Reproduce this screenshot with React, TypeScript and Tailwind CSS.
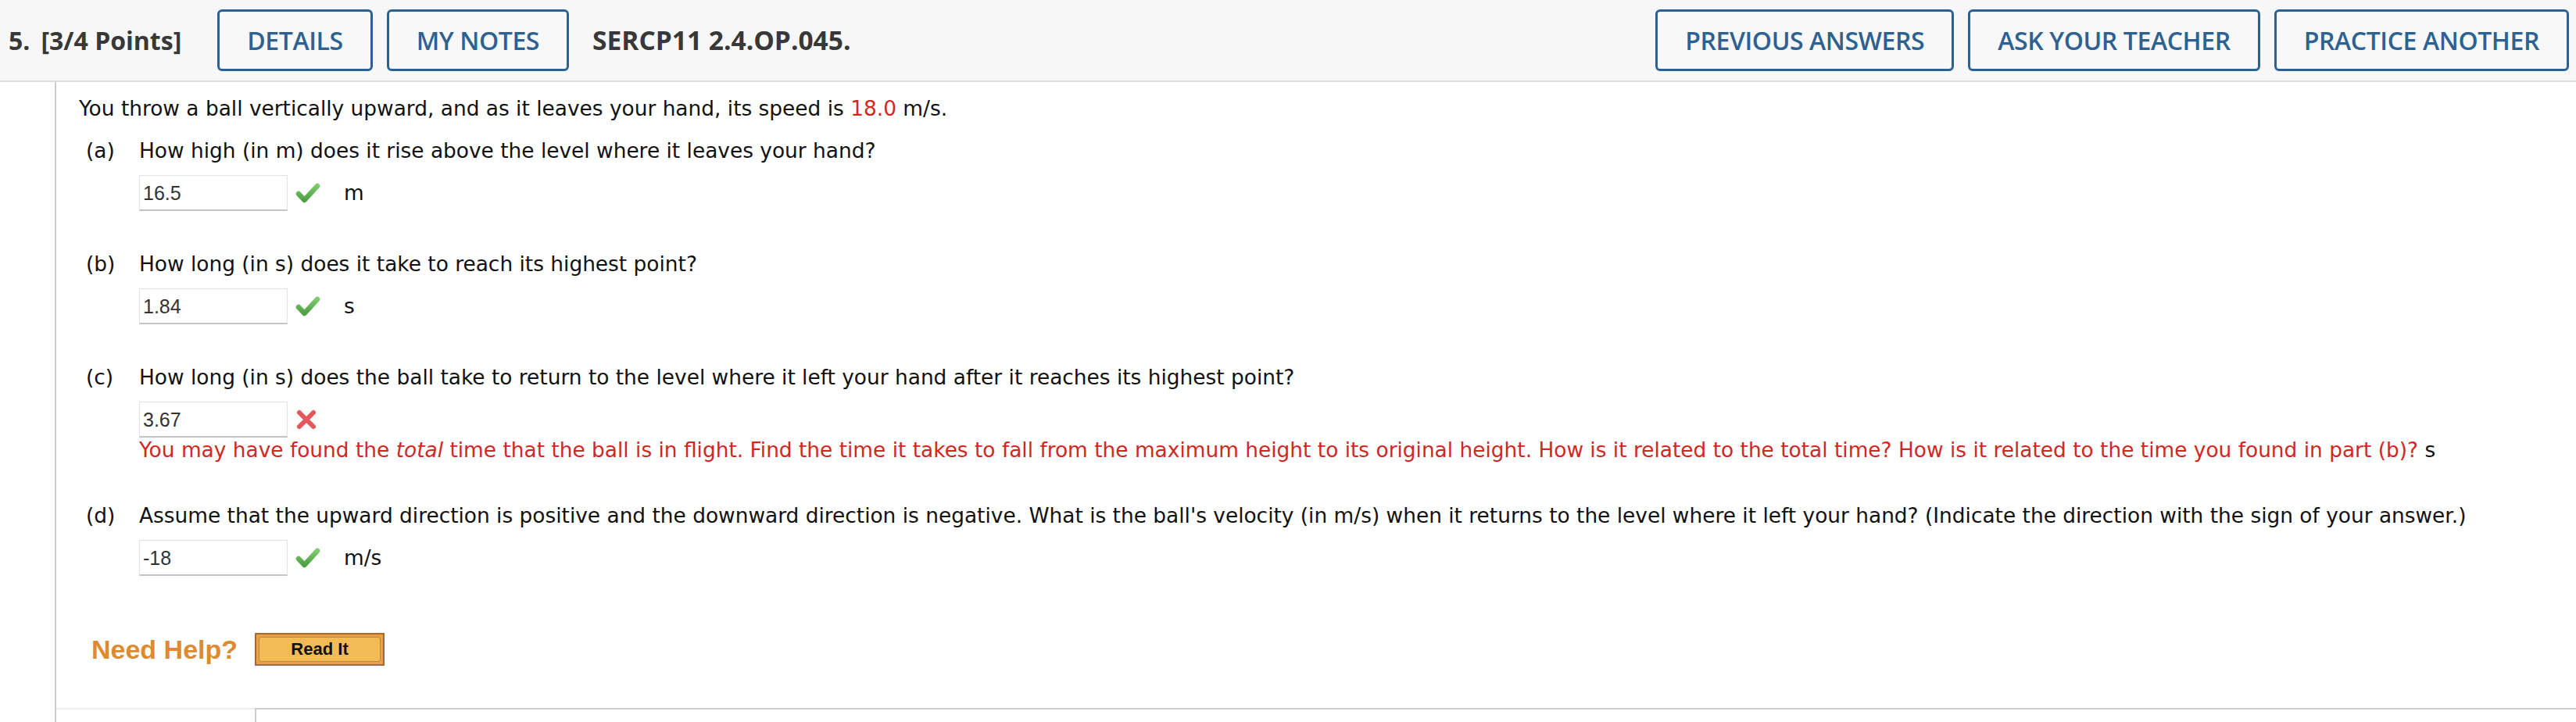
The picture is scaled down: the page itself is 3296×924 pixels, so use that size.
import React from "react";

const body = { fontFamily: '"DejaVu Sans", Verdana, sans-serif' };
const sans = { fontFamily: '"Open Sans", sans-serif' };
const arial = { fontFamily: '"Liberation Sans", Arial, sans-serif' };

function CheckMark() {
  return (
    <svg width="34" height="28" viewBox="0 0 34 28" className="shrink-0">
      <defs>
        <linearGradient id="chk" x1="0" y1="0" x2="0" y2="1">
          <stop offset="0" stopColor="#7ccb6c" />
          <stop offset="1" stopColor="#4f9f44" />
        </linearGradient>
      </defs>
      <path d="M5 15 L12.5 23 L29 5" fill="none" stroke="url(#chk)" strokeWidth="6.5" strokeLinecap="round" strokeLinejoin="round" />
    </svg>
  );
}

function CrossMark() {
  return (
    <svg width="28" height="28" viewBox="0 0 28 28" className="shrink-0">
      <path d="M5 5 L23 23 M23 5 L5 23" fill="none" stroke="#e4575c" strokeWidth="6" strokeLinecap="round" />
    </svg>
  );
}

function HeaderButton({ label }: { label: string }) {
  return (
    <div
      className="h-[79px] px-[35px] flex items-center border-[3px] border-[#2d6192] rounded-[6px] bg-[#f8f8f8] text-[#2d6192] text-[32px] font-semibold tracking-[-0.4px]"
      style={sans}
    >
      {label}
    </div>
  );
}

function AnswerBox({ value }: { value: string }) {
  return (
    <div
      className="w-[190px] h-[46px] border border-[#e2e2e2] border-b-2 border-b-[#c4c4c4] bg-white pl-[4px] flex items-center text-[25px] text-[#333]"
      style={arial}
    >
      {value}
    </div>
  );
}

interface Part {
  label: string;
  question: string;
  value: string;
  correct: boolean;
  unit: string;
}

const parts: Part[] = [
  { label: "(a)", question: "How high (in m) does it rise above the level where it leaves your hand?", value: "16.5", correct: true, unit: "m" },
  { label: "(b)", question: "How long (in s) does it take to reach its highest point?", value: "1.84", correct: true, unit: "s" },
  {
    label: "(c)",
    question: "How long (in s) does the ball take to return to the level where it left your hand after it reaches its highest point?",
    value: "3.67",
    correct: false,
    unit: "s",
  },
  {
    label: "(d)",
    question:
      "Assume that the upward direction is positive and the downward direction is negative. What is the ball's velocity (in m/s) when it returns to the level where it left your hand? (Indicate the direction with the sign of your answer.)",
    value: "-18",
    correct: true,
    unit: "m/s",
  },
];

export default function App() {
  return (
    <div className="min-h-[924px] bg-white text-[#111] flex flex-col">
      {/* header */}
      <header className="h-[105px] bg-[#f7f7f7] border-b-2 border-[#dddddd] flex items-center pl-[11px] pr-[9px]" style={sans}>
        <div className="text-[32px] font-bold text-[#383838]">
          5.<span className="ml-[14px]">[3/4 Points]</span>
        </div>
        <div className="flex gap-[18px] ml-[46px]">
          <HeaderButton label="DETAILS" />
          <HeaderButton label="MY NOTES" />
        </div>
        <div className="ml-[30px] text-[33.5px] font-bold text-[#383838]">SERCP11 2.4.OP.045.</div>
        <div className="ml-auto flex gap-[18px]">
          <HeaderButton label="PREVIOUS ANSWERS" />
          <HeaderButton label="ASK YOUR TEACHER" />
          <HeaderButton label="PRACTICE ANOTHER" />
        </div>
      </header>

      {/* question body */}
      <div className="flex-1 ml-[70px] border-l-2 border-[#cccccc] flex flex-col">
        <div className="pl-[29px] pt-[18px] text-[26.4px] leading-[32px]" style={body}>
          <p>
            You throw a ball vertically upward, and as it leaves your hand, its speed is <span className="text-[#d0281f]">18.0</span> m/s.
          </p>

          {parts.map((part, i) => (
            <div key={part.label} className={`grid grid-cols-[68px_1fr] pl-[9px] ${i === 0 ? "mt-[22px]" : "mt-[52px]"}`}>
              <div>{part.label}</div>
              <div>
                <div>{part.question}</div>
                <div className="flex items-center mt-[15px]">
                  <AnswerBox value={part.value} />
                  {part.correct ? (
                    <div className="ml-[9px] w-[34px]"><CheckMark /></div>
                  ) : (
                    <div className="ml-[10px] w-[34px]"><CrossMark /></div>
                  )}
                  {part.correct && <span className="ml-[29px]">{part.unit}</span>}
                </div>
                {!part.correct && (
                  <div className="text-[#d0281f]">
                    You may have found the <i>total</i> time that the ball is in flight. Find the time it takes to fall from the
                    maximum height to its original height. How is it related to the total time? How is it related to the time you
                    found in part (b)? <span className="text-[#111]">s</span>
                  </div>
                )}
              </div>
            </div>
          ))}

          {/* need help */}
          <div className="flex items-center gap-[22px] mt-[73px] pl-[16px]">
            <span className="text-[34px] text-[#e08a30] font-bold" style={arial}>
              Need Help?
            </span>
            <div className="w-[166px] h-[42px] bg-[#e8a048] border-2 border-[#a8692c] p-[3px]">
              <div
                className="h-full rounded-[3px] bg-[#f2bb55] border border-[#b98a3c] flex items-center justify-center text-[22px] font-bold text-[#111]"
                style={arial}
              >
                Read It
              </div>
            </div>
          </div>
        </div>

        {/* footer edge */}
        <div className="mt-auto flex h-[18px]">
          <div className="w-[254px] border-t-2 border-[#eeeeee]" />
          <div className="flex-1 border-t-2 border-l-2 border-[#cccccc]" />
        </div>
      </div>
    </div>
  );
}
